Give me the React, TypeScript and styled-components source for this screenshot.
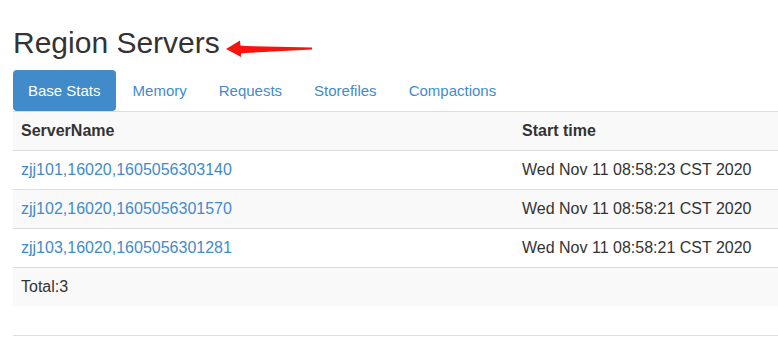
import React from 'react'
import styled, { createGlobalStyle } from 'styled-components'

const GlobalStyle = createGlobalStyle`
  html, body {
    margin: 0;
    padding: 0;
    background: #fff;
    overflow: hidden;
  }
  body {
    font-family: "Liberation Sans", Arial, Helvetica, sans-serif;
    color: #333;
  }
`

const Page = styled.div`
  padding: 26px 0 0 13px;
`

const Title = styled.h2`
  display: flex;
  align-items: flex-start;
  margin: 0 0 11px;
  font-size: 30px;
  font-weight: 500;
  line-height: 33px;
  color: #333;
`

const Arrow = styled.svg`
  width: 92px;
  height: 20px;
  margin-left: 6px;
  margin-top: 13px;
  flex: none;
`

const Pills = styled.ul`
  display: flex;
  margin: 0;
  padding: 0;
  list-style: none;
  border-bottom: 1px solid #ddd;
  gap: 2px;
`

const Pill = styled.li<{ $active?: boolean }>`
  padding: 10px 15px;
  font-size: 15px;
  line-height: 21px;
  border-radius: 4px;
  cursor: pointer;
  color: ${p => (p.$active ? '#fff' : '#428bca')};
  background: ${p => (p.$active ? '#428bca' : 'transparent')};
`

const Table = styled.table`
  width: 100%;
  border-collapse: collapse;
  font-size: 16px;
  line-height: 22px;
`

const Row = styled.tr<{ $shade?: boolean }>`
  background: ${p => (p.$shade ? '#f9f9f9' : '#fff')};
`

const HeadCell = styled.th<{ $w?: number }>`
  text-align: left;
  font-weight: bold;
  padding: 8px;
  width: ${p => (p.$w ? `${p.$w}px` : 'auto')};
  box-sizing: border-box;
`

const Cell = styled.td`
  padding: 8px;
  border-top: 1px solid #ddd;
`

const ServerLink = styled.a`
  color: #428bca;
  text-decoration: none;
`

const Divider = styled.div`
  margin-top: 29px;
  border-top: 1px solid #ddd;
`

const tabs = ['Base Stats', 'Memory', 'Requests', 'Storefiles', 'Compactions']

const servers = [
  { name: 'zjj101,16020,1605056303140', start: 'Wed Nov 11 08:58:23 CST 2020' },
  { name: 'zjj102,16020,1605056301570', start: 'Wed Nov 11 08:58:21 CST 2020' },
  { name: 'zjj103,16020,1605056301281', start: 'Wed Nov 11 08:58:21 CST 2020' },
]

const App = () => {
  return (
    <Page>
      <GlobalStyle />
      <Title>
        Region Servers
        <Arrow viewBox="0 0 92 20">
          <polygon
            points="0,10 14,1.5 14.5,6.5 20,7 86,8.5 86,10.5 20,14 15,14.5 15,18 Z"
            fill="#f5150f"
          />
        </Arrow>
      </Title>
      <Pills>
        {tabs.map((t, i) => (
          <Pill key={t} $active={i === 0}>{t}</Pill>
        ))}
      </Pills>
      <Table>
        <thead>
          <Row $shade>
            <HeadCell $w={501}>ServerName</HeadCell>
            <HeadCell>Start time</HeadCell>
          </Row>
        </thead>
        <tbody>
          {servers.map((s, i) => (
            <Row key={s.name} $shade={i % 2 === 1}>
              <Cell><ServerLink href="#">{s.name}</ServerLink></Cell>
              <Cell>{s.start}</Cell>
            </Row>
          ))}
          <Row $shade>
            <Cell colSpan={2}>Total:3</Cell>
          </Row>
        </tbody>
      </Table>
      <Divider />
    </Page>
  )
}

export default App
